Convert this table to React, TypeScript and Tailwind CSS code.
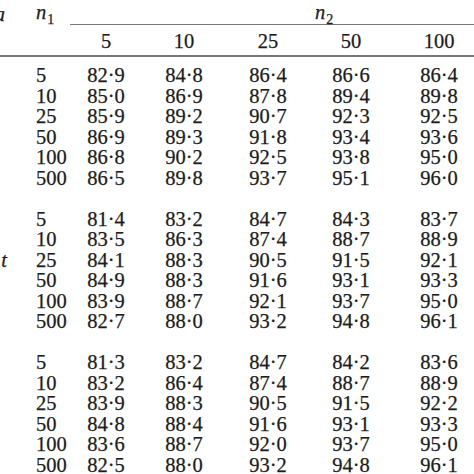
import React from "react";

const cols = "grid grid-cols-[36px_34px_72px_84px_84px_82px_94px_92px]";

const groups: { label: string; labelRow: number; rows: [string, string[]][] }[] = [
  {
    label: "",
    labelRow: 2,
    rows: [
      ["5", ["82·9", "84·8", "86·4", "86·6", "86·4"]],
      ["10", ["85·0", "86·9", "87·8", "89·4", "89·8"]],
      ["25", ["85·9", "89·2", "90·7", "92·3", "92·5"]],
      ["50", ["86·9", "89·3", "91·8", "93·4", "93·6"]],
      ["100", ["86·8", "90·2", "92·5", "93·8", "95·0"]],
      ["500", ["86·5", "89·8", "93·7", "95·1", "96·0"]],
    ],
  },
  {
    label: "t",
    labelRow: 2,
    rows: [
      ["5", ["81·4", "83·2", "84·7", "84·3", "83·7"]],
      ["10", ["83·5", "86·3", "87·4", "88·7", "88·9"]],
      ["25", ["84·1", "88·3", "90·5", "91·5", "92·1"]],
      ["50", ["84·9", "88·3", "91·6", "93·1", "93·3"]],
      ["100", ["83·9", "88·7", "92·1", "93·7", "95·0"]],
      ["500", ["82·7", "88·0", "93·2", "94·8", "96·1"]],
    ],
  },
  {
    label: "",
    labelRow: 2,
    rows: [
      ["5", ["81·3", "83·2", "84·7", "84·2", "83·6"]],
      ["10", ["83·2", "86·4", "87·4", "88·7", "88·9"]],
      ["25", ["83·9", "88·3", "90·5", "91·5", "92·2"]],
      ["50", ["84·8", "88·4", "91·6", "93·1", "93·3"]],
      ["100", ["83·6", "88·7", "92·0", "93·7", "95·0"]],
      ["500", ["82·5", "88·0", "93·2", "94·8", "96·1"]],
    ],
  },
];

function N({ sub }: { sub: string }) {
  return (
    <span className="italic">
      n<span className="not-italic text-[14px] relative top-[5px] ml-[1px]">{sub}</span>
    </span>
  );
}

export default function App() {
  return (
    <div
      className="w-[474px] h-[474px] overflow-hidden bg-white text-[#1c1c1c] text-[20.5px] leading-[20.5px] [-webkit-text-stroke:0.25px_#1c1c1c]"
      style={{ fontFamily: '"Liberation Serif", "Times New Roman", serif' }}
    >
      <div className="w-[578px] pt-[2px] flex flex-col">
        {/* header row 1 */}
        <div className={`${cols} h-[20px] items-center`}>
          <div className="flex justify-end pr-[31px] whitespace-nowrap italic">a</div>
          <div>
            <N sub="1" />
          </div>
          <div className="col-span-6 text-center">
            <N sub="2" />
          </div>
        </div>
        <div className={`${cols} mt-[1.5px]`}>
          <div className="col-start-3 col-span-6 h-[1.8px] bg-[#777]" />
        </div>
        {/* header row 2 */}
        <div className={`${cols} h-[20px] mt-[6px] items-center`}>
          <div />
          <div />
          {["5", "10", "25", "50", "100", ""].map((v, i) => (
            <div key={i} className="text-center">
              {v}
            </div>
          ))}
        </div>
        <div className="mt-[4px] h-[1.8px] bg-[#777]" />
        <div className="mt-[8px] flex flex-col">
          {groups.map((g, gi) => (
            <div key={gi} className={`flex flex-col ${gi > 0 ? "mt-[20.5px]" : ""}`}>
              {g.rows.map(([n1, vals], ri) => (
                <div key={ri} className={`${cols} h-[20.5px] items-center`}>
                  <div className="flex justify-end pr-[29px] whitespace-nowrap italic">
                    {ri === g.labelRow ? g.label : ""}
                  </div>
                  <div>{n1}</div>
                  {vals.map((v, vi) => (
                    <div key={vi} className="text-center">
                      {v}
                    </div>
                  ))}
                  <div />
                </div>
              ))}
            </div>
          ))}
        </div>
      </div>
    </div>
  );
}
